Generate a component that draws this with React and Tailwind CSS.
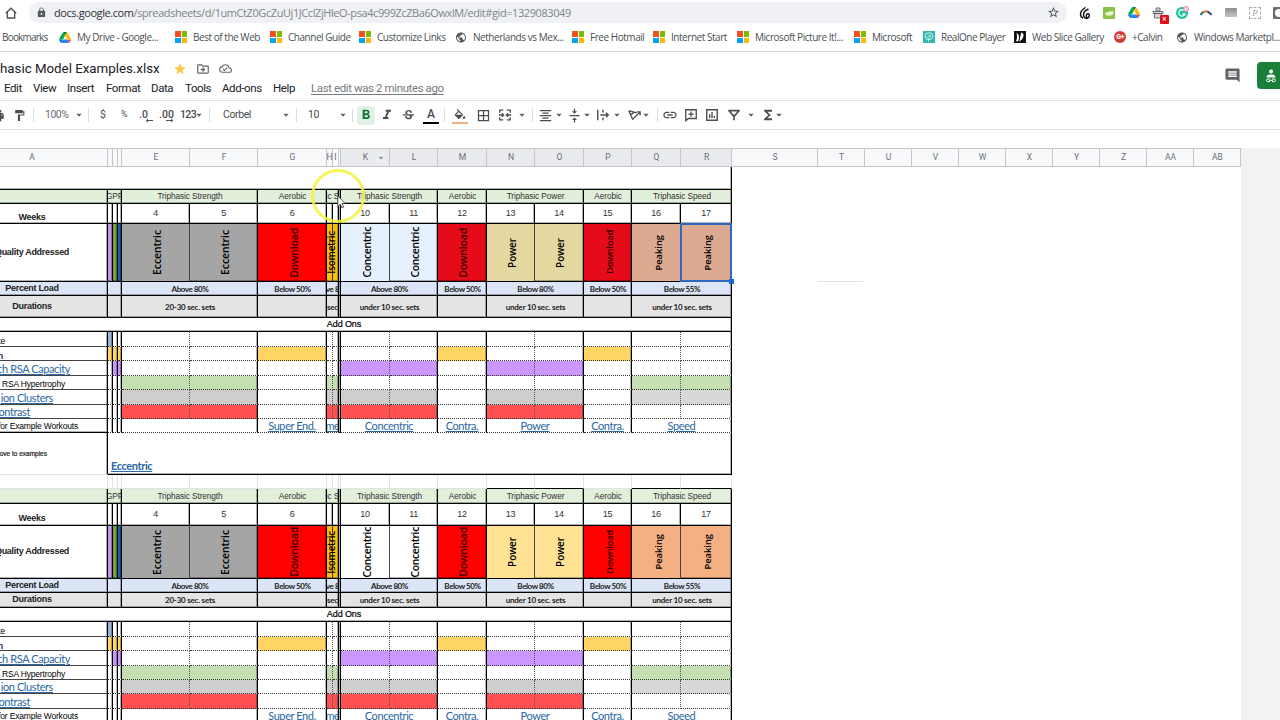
import clsx from 'clsx'
import {
  MdLock, MdStarBorder, MdStar, MdOutlineDriveFileMove, MdOutlineCloudDone, MdComment, MdFormatPaint,
  MdFormatBold, MdFormatItalic, MdStrikethroughS, MdFormatColorFill, MdBorderAll,
  MdFormatAlignCenter, MdVerticalAlignCenter, MdLink, MdFunctions, MdPrint, MdPublic,
} from 'react-icons/md'

const GRID = 'grid grid-cols-[108px_5px_5px_4px_68px_68px_69px_6px_6px_2px_49px_48px_49px_48px_49px_48px_49px_51px] w-[732px]'
const SPAN = { 1: 'col-span-1', 2: 'col-span-2', 3: 'col-span-3', 17: 'col-span-17', 18: 'col-span-18' }
const ARIAL = "font-['Liberation_Sans',sans-serif]"
const CALIBRI = "font-['Lato',sans-serif]"
const CORBEL = "font-['Open_Sans',sans-serif]"

const Windows = () => (
  <div className="grid grid-cols-2 gap-px w-3 h-3">
    <i className="bg-[#f25022]" /><i className="bg-[#7fba00]" /><i className="bg-[#00a4ef]" /><i className="bg-[#ffb900]" />
  </div>
)

const Drive = () => (
  <svg viewBox="0 0 87 78" className="w-3 h-[11px]">
    <path d="M6.6 66.85l3.85 6.65c.8 1.4 1.95 2.5 3.3 3.3L27.5 53H0c0 1.55.4 3.1 1.2 4.5z" fill="#0066da" />
    <path d="M43.65 25L29.9 1.2c-1.35.8-2.5 1.9-3.3 3.3l-25.4 44A9 9 0 0 0 0 53h27.5z" fill="#00ac47" />
    <path d="M73.55 76.8c1.35-.8 2.5-1.9 3.3-3.3l9.25-16c.8-1.4 1.2-2.95 1.2-4.5H59.8l5.85 11.5z" fill="#ea4335" />
    <path d="M43.65 25L57.4 1.2C56.05.4 54.5 0 52.9 0H34.4c-1.6 0-3.15.45-4.5 1.2z" fill="#00832d" />
    <path d="M59.8 53H27.5L13.75 76.8c1.35.8 2.9 1.2 4.5 1.2h50.8c1.6 0 3.15-.45 4.5-1.2z" fill="#2684fc" />
    <path d="M73.4 26.5L60.7 4.5c-.8-1.4-1.95-2.5-3.3-3.3L43.65 25 59.8 53h27.45c0-1.55-.4-3.1-1.2-4.5z" fill="#ffba00" />
  </svg>
)

const RealOne = () => (
  <svg viewBox="0 0 12 12" className="w-3 h-3">
    <rect width="12" height="12" fill="#35b5b0" />
    <ellipse cx="6" cy="5.2" rx="4" ry="3.4" fill="none" stroke="#c9f3ee" strokeWidth="1" />
    <path d="M4.5 6.5c1-3 4-2.500 3-1s-3 2-2 5" fill="none" stroke="#e6fffb" strokeWidth=".9" />
  </svg>
)

const WebSlice = () => (
  <svg viewBox="0 0 12 12" className="w-3 h-3">
    <rect width="12" height="12" fill="#111" />
    <path d="M2.500 2c2 .5 2.800 3 2.500 5.500L4 10.500 2 10c1-2 1.500-5 .5-8zM7.500 1.500C9.500 2 10 4 9.200 6 8.500 8 7 10 5 10.500 6.500 8 6 4 7.500 1.500z" fill="#fff" />
  </svg>
)

const GPlus = () => (
  <div className="w-3 h-3 rounded-full bg-[#d03b36] text-white text-[7px] leading-3 text-center font-bold font-['Roboto',sans-serif]">G+</div>
)

const Globe = () => <MdPublic className="w-[13px] h-[13px] text-[#55595e]" />

const BOOKMARKS = [
  [Drive, 'My Drive - Google...', 'w-[116px]'],
  [Windows, 'Best of the Web', 'w-[95px]'],
  [Windows, 'Channel Guide', 'w-[89px]'],
  [Windows, 'Customize Links', 'w-[96px]'],
  [Globe, 'Netherlands vs Mex...', 'w-[117px]'],
  [Windows, 'Free Hotmail', 'w-[81px]'],
  [Windows, 'Internet Start', 'w-[84px]'],
  [Windows, 'Microsoft Picture It!...', 'w-[117px]'],
  [Windows, 'Microsoft', 'w-[69px]'],
  [RealOne, 'RealOne Player', 'w-[91px]'],
  [WebSlice, 'Web Slice Gallery', 'w-[100px]'],
  [GPlus, '+Calvin', 'w-[62px]'],
  [Globe, 'Windows Marketpl...', 'w-[104px]'],
]

function BrowserBar() {
  return (
    <div className="h-[25px] shrink-0 flex items-center">
      <svg viewBox="0 0 12 12" className="w-3 h-3 ml-[5px] shrink-0" fill="none" stroke="#4b4f54" strokeWidth="1.300">
        <path d="M.8 6.300L6 1.200l5.200 5.100M2.300 5v6h7.400V5" />
      </svg>
      <div className="ml-3 w-[1038px] h-[21px] rounded-full bg-[#eff1f4] flex items-center shrink-0">
        <MdLock className="ml-[7px] w-[11px] h-[11px] text-[#55595e]" />
        <span className="ml-[7px] grow pt-px text-[11px] tracking-[-0.42px] text-[#80858b] font-['Open_Sans',sans-serif] whitespace-nowrap">
          <span className="text-[#2f3236]">docs.google.com</span>/spreadsheets/d/1umCtZ0GcZuUj1JCclZjHleO-psa4c999ZcZBa6OwxlM/edit#gid=1329083049
        </span>
        <MdStarBorder className="mr-[7px] w-[13px] h-[13px] text-[#4b4f54]" />
      </div>
      <div className="ml-3 flex items-center gap-[12.300px] shrink-0">
        <svg viewBox="0 0 12 12" className="w-3 h-3" fill="none" stroke="#111" strokeWidth="1.400">
          <path d="M6.500.5C4 2 1.500 4 1.500 7.200c0 1.800 1 3.300 2.500 4M9.500 2C6.500 3.300 4.300 5.200 4.500 8c.2 2 1.300 3.300 3 3.300 1.600 0 2.800-1.300 2.800-3 0-1.500-1.800-2.300-2.700-.8-.5 1-.3 2 .3 2.800" />
        </svg>
        <svg viewBox="0 0 12 12" className="w-3 h-3">
          <rect width="12" height="12" rx="1" fill="#8bc34a" />
          <path d="M1.800 5.500h3l1-1.200 2 .2 2.700-.7-.5 1.500.6 1-2 2.200H3.300z" fill="#eef8dd" />
        </svg>
        <Drive />
        <div className="relative w-3 h-3">
          <svg viewBox="0 0 12 12" className="w-3 h-3" fill="#d5d7d9" stroke="#55595e" strokeWidth=".8">
            <path d="M4 1h4v3H4zM1 4.500h10v2H1zM2.500 6.500h7V11h-7z" />
          </svg>
          <div className="absolute left-2 top-2 w-[9px] h-[9px] rounded-[1px] bg-[#e30d16] text-white text-[8px] leading-[8px] font-bold text-center">×</div>
        </div>
        <div className="relative w-3 h-3 rounded-full bg-[#15c39a]">
          <svg viewBox="0 0 12 12" className="w-3 h-3" fill="none" stroke="#fff" strokeWidth="1.300">
            <path d="M8.500 4A3.200 3.200 0 1 0 9 7H6.500" />
          </svg>
          <div className="absolute left-[7px] -top-px w-[6px] h-[6px] rounded-full bg-[#f7d3e2] border border-[#d786ab]" />
        </div>
        <svg viewBox="0 0 12 12" className="w-3 h-3" fill="none" strokeWidth="2">
          <path d="M.5 8Q2 5 4 5" stroke="#2f6f5c" /><path d="M3.500 5.200Q6 3.500 8 5" stroke="#e2763a" /><path d="M7.500 4.800Q10 5.500 11.500 8" stroke="#274b74" />
        </svg>
        <div className="w-3 h-[9px] rounded-[1px] bg-gradient-to-b from-[#909090] to-[#c4c4c4]" />
        <div className="w-3 h-3 border border-dashed border-[#a9acaf] text-[9px] leading-[10px] text-center italic text-[#9a9da0] font-['Liberation_Serif',serif]">P</div>
        <div className="w-3 h-3 rounded-[1px] bg-[#6b6e71] p-[2px]"><div className="w-2 h-2 rounded-full bg-white" /></div>
      </div>
    </div>
  )
}

function Bookmarks() {
  return (
    <div className="h-[27px] shrink-0 pb-[2px] flex items-center border-b border-[#cfd1d4] text-[10px] tracking-[-0.46px] text-[#4b4f54] font-['Open_Sans',sans-serif] whitespace-nowrap">
      <span className="w-[59px] pl-[2px] tracking-[-0.8px] shrink-0">Bookmarks</span>
      {BOOKMARKS.map(([Icon, label, width], i) => (
        <div key={i} className={clsx('flex items-center gap-[6px] shrink-0', width)}>
          <span className="w-3 h-3 flex items-center justify-center shrink-0"><Icon /></span>
          <span>{label}</span>
        </div>
      ))}
    </div>
  )
}

const MENU = [
  ['Edit', 'w-[29px]'], ['View', 'w-[34px]'], ['Insert', 'w-[39px]'], ['Format', 'w-[45px]'], ['Data', 'w-[34px]'],
  ['Tools', 'w-[37px]'], ['Add-ons', 'w-[51px]'], ['Help', 'w-[38px]'],
]

function DocHeader() {
  return (
    <div className="h-[49px] shrink-0 flex border-b border-[#e1e3e6]">
      <div className="grow font-['Roboto',sans-serif] whitespace-nowrap">
        <div className="flex items-center h-[28px] pt-[5px]">
          <span className="w-[173px] text-[13.300px] text-[#202124]">hasic Model Examples.xlsx</span>
          <MdStar className="w-[14px] h-[14px] text-[#f7cb4d]" />
          <MdOutlineDriveFileMove className="ml-[9px] w-[14px] h-[14px] text-[#5f6368]" />
          <MdOutlineCloudDone className="ml-[9px] w-[13px] h-[13px] text-[#5f6368]" />
        </div>
        <div className="flex items-center h-[18px] pl-1 text-[11.500px] tracking-[-0.4px] text-[#202124]">
          {MENU.map(([label, width]) => <span key={label} className={width}>{label}</span>)}
          <span className="text-[#777b80] underline underline-offset-2">Last edit was 2 minutes ago</span>
        </div>
      </div>
      <MdComment className="w-[17px] h-[17px] mt-[15px] mr-4 text-[#5f6368]" />
      <div className="w-[23px] h-[27px] mt-[10px] rounded-l bg-[#188038] flex items-center justify-center pl-[5px]">
        <svg viewBox="0 0 12 14" className="w-3 h-[14px]" fill="#fff">
          <circle cx="6" cy="2.500" r="2" /><path d="M1.500 8.500C1.500 6 4 5.500 6 5.500s4.500.5 4.500 3z" />
          <path d="M5 10H2.800a1.200 1.200 0 0 0 0 2.600H5M7 10h2.200a1.200 1.200 0 0 1 0 2.600H7M4 11.300h4" fill="none" stroke="#fff" strokeWidth="1" />
        </svg>
      </div>
    </div>
  )
}

const Caret = ({ className }) => (
  <svg viewBox="0 0 8 8" className={clsx('w-2 h-2 shrink-0', className)} fill="#5f6368"><path d="M1.300 2.800h5.400L4 5.700z" /></svg>
)
const Sep = ({ className }) => <div className={clsx('w-px h-[14px] bg-[#dadce0] shrink-0', className)} />

function Glyph({ d, className, w = 1.8 }) {
  return (
    <svg viewBox="0 0 16 16" className={clsx('w-[14px] h-[14px] shrink-0', className)} fill="none" stroke="#4a4d51" strokeWidth={w}>
      <path d={d} />
    </svg>
  )
}

function Toolbar() {
  return (
    <div className="h-[29px] shrink-0 flex items-center border-b border-[#e1e3e6] text-[#4a4d51] text-[10.500px] font-['Roboto',sans-serif] whitespace-nowrap">
      <MdPrint className="-ml-[10px] w-[15px] h-[15px] shrink-0" />
      <MdFormatPaint className="ml-2 w-[13px] h-[13px] shrink-0" />
      <Sep className="ml-[7px]" />
      <span className="ml-[11px] w-[30px] tracking-[-0.5px] text-[#6a6d71]">100%</span>
      <Caret />
      <Sep className="ml-[5px]" />
      <span className="ml-[11px] w-2">$</span>
      <span className="ml-[13px] w-[10px] text-[9px]">%</span>
      <div className="ml-2 w-[14px] relative font-medium">.0
        <svg viewBox="0 0 8 5" className="absolute left-[6px] top-[11px] w-2 h-[5px]" fill="none" stroke="#4a4d51"><path d="M8 2.500H1.500M3 .8L1.200 2.500 3 4.200" /></svg>
      </div>
      <div className="ml-[6px] w-[16px] relative font-medium">.00
        <svg viewBox="0 0 8 5" className="absolute left-[7px] top-[11px] w-2 h-[5px]" fill="none" stroke="#4a4d51"><path d="M0 2.500h6.500M5 .8l1.800 1.700L5 4.200" /></svg>
      </div>
      <span className="ml-[5px] w-[16px] tracking-[-0.6px] font-medium">123</span>
      <Caret className="-ml-px" />
      <Sep className="ml-[6px]" />
      <span className="ml-[13px] w-[59px] tracking-[-0.4px]">Corbel</span>
      <Caret />
      <Sep className="ml-[6px]" />
      <span className="ml-[11px] w-[31px] tracking-[-0.3px]">10</span>
      <Caret />
      <Sep className="ml-[5px]" />
      <div className="ml-1 w-[18px] h-[19px] bg-[#e2f1e6] rounded-sm flex items-center justify-center shrink-0">
        <MdFormatBold className="w-[16px] h-[16px] text-[#137333]" />
      </div>
      <MdFormatItalic className="ml-[4px] w-[16px] h-[16px] shrink-0" />
      <MdStrikethroughS className="ml-[6px] w-[15px] h-[15px] shrink-0" />
      <div className="ml-[7px] w-4 h-[18px] flex flex-col items-center justify-end shrink-0">
        <span className="text-[12px] leading-[13px] font-medium">A</span><i className="mt-px w-4 h-[2px] bg-black" />
      </div>
      <Sep className="ml-[5px]" />
      <div className="ml-[7px] w-4 h-[18px] flex flex-col items-center justify-end shrink-0">
        {/* only the bucket part of the icon, its own swatch is cut off */}
        <div className="h-[11px] overflow-hidden"><MdFormatColorFill className="w-[14px] h-[14px]" /></div>
        <i className="mt-[2px] w-4 h-[2px] bg-[#f4b183]" />
      </div>
      <MdBorderAll className="ml-2 w-[15px] h-[15px] shrink-0" />
      <Glyph className="ml-[7px]" d="M6 2.500H2v3M10 2.500h4v3M6 13.500H2v-3M10 13.500h4v-3M1 8h5M15 8h-5M4.500 6L6.500 8l-2 2M11.500 6l-2 2 2 2" w={1.500} />
      <Caret className="ml-[6px]" />
      <Sep className="ml-[6px]" />
      <MdFormatAlignCenter className="ml-[5px] w-[15px] h-[15px] shrink-0" />
      <Caret className="ml-[2px]" />
      <MdVerticalAlignCenter className="ml-[4px] w-[15px] h-[15px] shrink-0" />
      <Caret className="ml-px" />
      <Glyph className="ml-[5px]" d="M2 2v12M8 2v3M8 11v3M5 8h9M11.500 5.500L14 8l-2.500 2.500" w={1.600} />
      <Caret className="ml-[3px]" />
      <Glyph className="ml-[6px]" d="M2 3l9 2.500M2 3l4 9M4 8l4-3M6 13.500L14.500 5M11 4.500h4v4" w={1.500} />
      <Caret className="ml-px" />
      <Sep className="ml-[7px]" />
      <MdLink className="ml-[4px] w-[16px] h-[16px] shrink-0" />
      <Glyph className="ml-[6px]" d="M2 2h12v10H5l-3 2.500zM8 4v6M5 7h6" w={1.500} />
      <Glyph className="ml-[7px]" d="M2 2h12v12H2zM5.300 7v4.500M8 4.500v7M10.700 9v2.500" w={1.600} />
      <Glyph className="ml-[8px]" d="M1.500 3h13M2.500 3.500l5 5.500M13.500 3.500L8.500 9M8 8v6" w={1.900} />
      <Caret className="ml-[6px]" />
      <MdFunctions className="ml-[5px] w-[16px] h-[16px] shrink-0" />
      <Caret className="-ml-px" />
    </div>
  )
}

const COLUMNS = [
  ['A', 'w-[108px] pr-[43px]'], ['', 'w-[5px]'], ['', 'w-[5px]'], ['', 'w-[4px]'], ['E', 'w-[68px]'], ['F', 'w-[68px]'], ['G', 'w-[69px]'],
  ['H', 'w-[6px]'], ['I', 'w-[6px]'], ['', 'w-[2px]'], ['K', 'w-[49px]', 1], ['L', 'w-[48px]', 1], ['M', 'w-[49px]', 1],
  ['N', 'w-[48px]', 1], ['O', 'w-[49px]', 1], ['P', 'w-[48px]', 1], ['Q', 'w-[49px]', 1], ['R', 'w-[51px]', 1], ['S', 'w-[86px]'],
  ['T', 'w-[47px]'], ['U', 'w-[47px]'], ['V', 'w-[47px]'], ['W', 'w-[47px]'], ['X', 'w-[47px]'], ['Y', 'w-[47px]'],
  ['Z', 'w-[47px]'], ['AA', 'w-[47px]'], ['AB', 'w-[47px]'],
]

function ColumnHeads() {
  return (
    <div className="h-[19px] flex border-y border-[#c4c6c9] w-[1241px] text-[8.500px] text-[#6b6f74] font-['Roboto',sans-serif]">
      {COLUMNS.map(([name, width, selected], i) => (
        <div key={i} className={clsx('relative flex items-center justify-center shrink-0 border-r border-[#c4c6c9]', width, selected ? 'bg-[#e8eaed]' : 'bg-[#f8f9fa]', name.length > 0 && i > 0 && i !== 7 && i !== 8 && 'pl-px')}>
          {name}
          {name === 'K' && <Caret className="absolute right-1 top-[5px] bg-[#f6f7f8] opacity-60" />}
        </div>
      ))}
    </div>
  )
}

// r / b choose the right and bottom rule: solid, thin, dot or none
const RIGHT = {
  solid: 'border-r border-r-black', thin: 'border-r border-r-[#444]',
  dot: 'border-r border-r-[#555] [border-right-style:dotted]', grid: 'border-r border-r-[#e2e3e5]', none: '',
}
const BOTTOM = {
  solid: 'border-b border-b-black', thin: 'border-b border-b-[#444]',
  dot: 'border-b border-b-[#333] [border-bottom-style:dotted]', grid: 'border-b border-b-[#e2e3e5]', none: '',
}

function Cell({ span = 1, r = 'solid', b = 'solid', className, children }) {
  return (
    <div className={clsx('relative flex items-center justify-center overflow-hidden whitespace-nowrap min-w-0', SPAN[span], RIGHT[r], BOTTOM[b],
      r === 'solid' && b === 'solid' && 'shadow-[inset_-1px_-1px_0_rgba(0,0,0,0.3)]',
      r === 'solid' && b !== 'solid' && 'shadow-[inset_-1px_0_0_rgba(0,0,0,0.3)]', className)}>
      {children}
    </div>
  )
}

// spans of the merged phase blocks, B to R
const PHASES = [3, 2, 1, 2, 1, 2, 1, 2, 1, 2]

const HEAD = clsx(ARIAL, 'text-[9px] tracking-[-0.3px] font-bold text-[#222]')

function Merged({ h, label, texts, bg, font }) {
  return (
    <div className={clsx(GRID, h)}>
      <Cell className={clsx('pr-[43px]', bg, HEAD)}>{label}</Cell>
      {PHASES.map((span, i) => <Cell key={i} span={span} className={clsx(bg, font, texts[i].length > 4 && 'pl-px')}>{texts[i]}</Cell>)}
    </div>
  )
}

function Split({ h, label, texts }) {
  return (
    <div className={clsx(GRID, h)}>
      <Cell className={clsx('pr-[43px] pt-[8px]', HEAD)}>{label}</Cell>
      {PHASES.map((span, i) => (
        i === 0
          ? [0, 1, 2].map((k) => <Cell key={k} />)
          : [...Array(span)].map((_, k) => <Cell key={`${i}${k}`} className={clsx(ARIAL, 'text-[9px] tracking-[-0.3px] text-[#333]')}>{texts[i][k]}</Cell>)
      ))}
    </div>
  )
}

const Turned = ({ className, children }) => (
  <span className={clsx('[writing-mode:vertical-rl] rotate-180 shrink-0 font-semibold leading-none', CORBEL, className)}>{children}</span>
)

function Load({ h, selected }) {
  const conc = selected ? 'bg-[#e7f1fd]' : 'bg-white'
  const red = selected ? 'bg-[#e60b19]' : 'bg-[#fe0000]'
  const power = selected ? 'bg-[#e4d8a0]' : 'bg-[#ffe294]'
  const peak = selected ? 'bg-[#dcaa91]' : 'bg-[#f4b083]'
  const edge = selected && 'border-b-[#1c3f82]'
  return (
    <div className={clsx(GRID, h)}>
      <Cell className={clsx('pr-[43px]', HEAD)}>Quality Addressed</Cell>
      <Cell className="bg-[#c29ae8]" />
      <Cell className="bg-[#6f9d4b]" />
      <Cell className="bg-[#1764ab]" />
      <Cell r="thin" className="bg-[#a5a5a5]"><Turned className="text-[10.300px] ml-1">Eccentric</Turned></Cell>
      <Cell className="bg-[#a5a5a5]"><Turned className="text-[10.300px] ml-[3px]">Eccentric</Turned></Cell>
      <Cell className="bg-[#fe0000] text-[#3a0000]"><Turned className="text-[10.500px] tracking-[-0.2px] ml-1">Download</Turned></Cell>
      <Cell span={2} className="bg-[#fdbf0c]">
        <span className="absolute inset-y-0 left-[5px] w-px bg-[#333]" />
        <Turned className="text-[9.800px] -ml-px tracking-[-0.2px] font-bold">Isometric</Turned>
      </Cell>
      <Cell />
      <Cell r="thin" className={clsx(conc, edge)}><Turned className="text-[10.300px] tracking-[-0.3px] ml-[5px]">Concentric</Turned></Cell>
      <Cell className={clsx(conc, edge)}><Turned className="text-[10.300px] tracking-[-0.3px] ml-[3px]">Concentric</Turned></Cell>
      <Cell className={clsx(red, edge, 'text-[#3a0000]')}><Turned className="text-[10.500px] tracking-[-0.2px] ml-[3px]">Download</Turned></Cell>
      <Cell r="thin" className={clsx(power, edge)}><Turned className="text-[9.800px] ml-[5px]">Power</Turned></Cell>
      <Cell className={clsx(power, edge)}><Turned className="text-[9.800px] ml-[3px]">Power</Turned></Cell>
      <Cell className={clsx(red, edge, 'text-[#3a0000]')}><Turned className="text-[9.500px] tracking-[-0.3px] ml-[5px]">Download</Turned></Cell>
      <Cell r="thin" className={clsx(peak, edge)}><Turned className="text-[9.300px] ml-[5px]">Peaking</Turned></Cell>
      <div className="relative z-10">
        <Cell className={clsx(peak, edge, 'h-full')}><Turned className="text-[9.300px] ml-1">Peaking</Turned></Cell>
        {selected && (
          <>
            <div className="absolute -left-px -top-px right-0 bottom-0 border-2 border-[#2f68bd]" />
            <div className="absolute -right-[2px] -bottom-[2px] w-[5px] h-[5px] bg-[#1a66d2]" />
          </>
        )}
      </div>
    </div>
  )
}

const Y = 'bg-[#ffd665]'
const P = 'bg-[#cb97ff]'
const G = 'bg-[#c5dfb2]'
const S = 'bg-[#d0cdce]'
const R = 'bg-[#ff5052]'
const FILLS = [
  { lead: ['bg-[#9cb3d6]', '', ''], fills: {} },
  { lead: [Y, Y, Y], fills: { 2: Y, 6: Y, 8: Y } },
  { lead: ['', P, P], fills: { 5: P, 7: P } },
  { lead: ['', '', ''], fills: { 1: G, 3: G, 9: G } },
  { lead: ['', '', ''], fills: { 1: S, 3: S, 5: S, 7: S, 9: 'bg-[#d8d8d9]' } },
  { lead: ['', '', ''], fills: { 1: R, 3: R, 5: R, 7: R } },
]

const LINK = clsx(CALIBRI, 'text-[11px] tracking-[-0.4px] text-[#2a67a3] underline')
const SMALL = clsx(ARIAL, 'text-[8.500px] tracking-[-0.18px]')
const LABELS = [
  ['te', 'w-[5px] pt-[4px]', SMALL],
  ['n', 'w-[3px] pt-[5px]', clsx(SMALL, 'font-bold text-[#2d1b69]')],
  ['ch RSA Capacity', 'w-[70px] pt-px', LINK],
  ['RSA Hypertrophy', 'w-[65px] pt-[4px]', SMALL],
  ['ion Clusters', 'w-[53px]', LINK],
  ['ontrast', 'w-[30px]', LINK],
]

function AddOns({ heights, top }) {
  const links = ['', '', 'Super End.', 'me', '', 'Concentric', 'Contra.', 'Power', 'Contra.', 'Speed']
  return (
    <>
      <div className={clsx(GRID, top)}>
        <Cell span={18} className={clsx(ARIAL, 'text-[9px] tracking-[-0.1px] text-black pr-[43px] [-webkit-text-stroke:0.2px_black]')}>Add Ons</Cell>
      </div>
      {FILLS.map(({ lead, fills }, row) => (
        <div key={row} className={clsx(GRID, heights[row])}>
          <Cell b="thin" className="justify-start">
            <span className={clsx('flex justify-end shrink-0 leading-none', LABELS[row][1], LABELS[row][2])}>{LABELS[row][0]}</span>
          </Cell>
          {lead.map((fill, k) => <Cell key={k} b="dot" className={fill} />)}
          {PHASES.slice(1).map((span, i) => (
            [...Array(span)].map((_, k) => (
              <Cell key={`${i}${k}`} b="dot" r={k === span - 1 ? 'solid' : 'dot'} className={fills[i + 1]} />
            ))
          ))}
        </div>
      ))}
      <div className={clsx(GRID, heights[6])}>
        <Cell className="justify-start"><span className={clsx('w-[78px] pt-px flex justify-end shrink-0', SMALL)}>for Example Workouts</span></Cell>
        {[0, 1, 2].map((k) => <Cell key={k} b="dot" />)}
        {PHASES.slice(1).map((span, i) => (
          <Cell key={i} span={span} b="dot" className={clsx(LINK, 'leading-none')}>{links[i + 1]}</Cell>
        ))}
      </div>
    </>
  )
}

const NAMES = ['GPP', 'Triphasic Strength', 'Aerobic', 'ic S', '', 'Triphasic Strength', 'Aerobic', 'Triphasic Power', 'Aerobic', 'Triphasic Speed']
const LOADS = ['', 'Above 80%', 'Below 50%', 've 8', '', 'Above 80%', 'Below 50%', 'Below 80%', 'Below 50%', 'Below 55%']
const SETS = ['', '20-30 sec. sets', '', 'sec', '', 'under 10 sec. sets', '', 'under 10 sec. sets', '', 'under 10 sec. sets']
const WEEKS = [[], ['4', '5'], ['6'], ['', ''], [''], ['10', '11'], ['12'], ['13', '14'], ['15'], ['16', '17']]

function Block({ h, selected }) {
  return (
    <>
      <Merged h={h.name} texts={NAMES} bg="bg-[#e2efda]" font={clsx(ARIAL, 'text-[8.300px] tracking-[-0.1px] text-[#333]')} />
      <Split h={h.weeks} label="Weeks" texts={WEEKS} />
      <Load h={h.load} selected={selected} />
      <Merged h={h.percent} label="Percent Load" texts={LOADS} bg="bg-[#dbe5f5]" font={clsx(CALIBRI, 'text-[8px] tracking-[-0.42px] font-bold text-[#222]')} />
      <Merged h={h.sets} label="Durations" texts={SETS} bg="bg-[#e5e4e5]" font={clsx(CALIBRI, 'text-[8px] tracking-[-0.22px] font-bold text-[#222]')} />
      <AddOns top={h.addons} heights={h.rows} />
    </>
  )
}

const FIRST = {
  name: 'h-[14px]', weeks: 'h-[20px]', load: 'h-[58px]', percent: 'h-[14px]', sets: 'h-[22px]', addons: 'h-[14px]',
  rows: ['h-[15px]', 'h-[14px]', 'h-[15px]', 'h-[14px]', 'h-[15px]', 'h-[14px]', 'h-[14px]'],
}
const SECOND = {
  name: 'h-[15px]', weeks: 'h-[22px]', load: 'h-[53px]', percent: 'h-[14px]', sets: 'h-[15px]', addons: 'h-[14px]',
  rows: ['h-[15px]', 'h-[14px]', 'h-[15px]', 'h-[14px]', 'h-[14px]', 'h-[15px]', 'h-[14px]'],
}

function Sheet() {
  return (
    <div className="relative w-[1241px] bg-white">
      <div className={clsx(GRID, 'h-[23px]')}><Cell span={18} /></div>
      <Block h={FIRST} selected />
      <div className={clsx(GRID, 'h-[42px]')}>
        <Cell b="grid" className="justify-start">
          <span className={clsx('w-[47px] flex justify-end shrink-0 text-[6.500px] text-[#222] [-webkit-text-stroke:0.2px_#222]', ARIAL)}>ove to examples</span>
        </Cell>
        <Cell span={17} className="justify-start items-end pl-[3px] pb-px">
          <span className={clsx(CALIBRI, 'text-[11px] tracking-[-0.4px] leading-[14px] font-bold text-[#2a67a3] underline')}>Eccentric</span>
        </Cell>
      </div>
      <div className={clsx(GRID, 'h-[14px]')}>
        {[...Array(18)].map((_, i) => <Cell key={i} r="grid" b={i === 13 || i === 14 || i > 15 ? 'solid' : 'grid'} />)}
      </div>
      <Block h={SECOND} />
      <div className="absolute left-[818px] top-[114px] w-[45px] h-px bg-[#e2e3e5]" />
      {/* click highlight and pointer */}
      <div className="absolute left-[311px] top-[2px] w-[54px] h-[54px] rounded-full border-[3px] border-[#f4f23c]/85" />
      <svg viewBox="0 0 9 14" className="absolute left-[337px] top-[28px] w-[9px] h-[14px]" fill="#fff" stroke="#333" strokeWidth=".8">
        <path d="M.8.800v10.700l2.500-2.300L5 13l1.700-.8L5 8.600h3.300z" />
      </svg>
    </div>
  )
}

export default function App() {
  return (
    <div className="w-[1280px] h-[720px] overflow-hidden bg-white flex flex-col">
      <BrowserBar />
      <Bookmarks />
      <DocHeader />
      <Toolbar />
      <div className="h-[18px] shrink-0" />
      <div className="grow min-h-0 overflow-hidden bg-[#f1f2f4]">
        <ColumnHeads />
        <Sheet />
      </div>
    </div>
  )
}
